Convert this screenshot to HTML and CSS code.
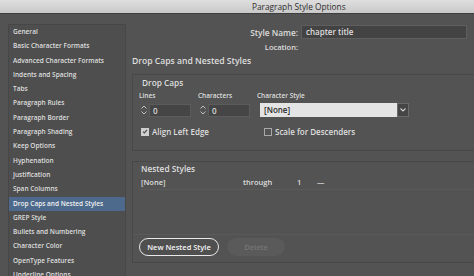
FILE: index.html
```html
<!DOCTYPE html>
<html lang="en">
<head>
    <meta charset="UTF-8">
    <title>Paragraph Style Options</title>
    <link rel="stylesheet" href="styles.css">
</head>
<body>
    <div class="titlebar">Paragraph Style Options</div>
    <div class="window">
        <nav class="sidebar">
            <div class="item">General</div>
            <div class="item">Basic Character Formats</div>
            <div class="item">Advanced Character Formats</div>
            <div class="item">Indents and Spacing</div>
            <div class="item">Tabs</div>
            <div class="item">Paragraph Rules</div>
            <div class="item">Paragraph Border</div>
            <div class="item">Paragraph Shading</div>
            <div class="item">Keep Options</div>
            <div class="item">Hyphenation</div>
            <div class="item">Justification</div>
            <div class="item">Span Columns</div>
            <div class="item selected">Drop Caps and Nested Styles</div>
            <div class="item">GREP Style</div>
            <div class="item">Bullets and Numbering</div>
            <div class="item">Character Color</div>
            <div class="item">OpenType Features</div>
            <div class="item">Underline Options</div>
        </nav>
        <main class="panel">
            <div class="field-row">
                <span class="field-label">Style Name:</span>
                <div class="name-input">chapter title</div>
            </div>
            <div class="field-row loc">
                <span class="field-label">Location:</span>
            </div>
            <h2 class="section-title">Drop Caps and Nested Styles</h2>

            <div class="group drop">
                <div class="group-title">Drop Caps</div>
                <div class="drop-row">
                    <div class="col">
                        <span class="small-label">Lines</span>
                        <div class="spinner">
                            <span class="arrows">
                                <svg width="8" height="12" viewBox="0 0 8 12"><path d="M1.5 4.5 L4 2 L6.5 4.5 M1.5 7.5 L4 10 L6.5 7.5" fill="none" stroke="#bdbdbd" stroke-width="1"/></svg>
                            </span>
                            <span class="spin-field">0</span>
                        </div>
                    </div>
                    <div class="col">
                        <span class="small-label">Characters</span>
                        <div class="spinner">
                            <span class="arrows">
                                <svg width="8" height="12" viewBox="0 0 8 12"><path d="M1.5 4.5 L4 2 L6.5 4.5 M1.5 7.5 L4 10 L6.5 7.5" fill="none" stroke="#bdbdbd" stroke-width="1"/></svg>
                            </span>
                            <span class="spin-field">0</span>
                        </div>
                    </div>
                    <div class="col">
                        <span class="small-label">Character Style</span>
                        <div class="dropdown">
                            <span class="drop-value">[None]</span>
                            <span class="drop-btn">
                                <svg width="6" height="4" viewBox="0 0 6 4"><path d="M0.5 0.5 L3 3 L5.5 0.5" fill="none" stroke="#d0d0d0" stroke-width="1.1"/></svg>
                            </span>
                        </div>
                    </div>
                </div>
                <div class="check-row">
                    <label class="check"><span class="box checked">
                        <svg width="7" height="7" viewBox="0 0 7 7"><path d="M1.2 3.6 L2.8 5.2 L5.8 1.5" fill="none" stroke="#4a4a4a" stroke-width="1.3"/></svg>
                    </span>Align Left Edge</label>
                    <label class="check scale"><span class="box"></span>Scale for Descenders</label>
                </div>
            </div>

            <div class="group nested">
                <div class="group-title">Nested Styles</div>
                <div class="nested-row">
                    <span class="n-style">[None]</span>
                    <span class="n-through">through</span>
                    <span class="n-count">1</span>
                    <span class="n-dash">—</span>
                </div>
                <div class="nested-list"></div>
                <div class="buttons">
                    <button class="btn primary">New Nested Style</button>
                    <button class="btn disabled">Delete</button>
                </div>
            </div>
        </main>
    </div>
</body>
</html>
```

FILE: styles.css
```css
body {
    margin: 0;
    width: 474px;
    height: 276px;
    overflow: hidden;
    background: #535353;
    font-family: "Open Sans", sans-serif;
    font-weight: 600;
    font-size: 7px;
    color: #dedede;
}
.titlebar {
    height: 14px;
    line-height: 14px;
    background: linear-gradient(#dedede, #c9c9c9);
    border-bottom: 1px solid #3e3e3e;
    box-sizing: border-box;
    color: #2e2e2e;
    font-size: 8.3px;
    font-weight: 400;
    padding-left: 252px;
}
.window {
    display: flex;
    padding-top: 10px;
}
.sidebar {
    width: 118px;
    margin-left: 8px;
    height: 260px;
    box-sizing: border-box;
    border: 1px solid #474747;
    border-bottom: none;
    background: #4e4e4e;
}
.item {
    height: 14.3px;
    line-height: 14.3px;
    padding-left: 4px;
    white-space: nowrap;
    font-size: 6.5px;
}
.item.selected {
    background: #4d6a8c;
    color: #f0f0f0;
}
.panel {
    flex: 1;
    padding-left: 6px;
    overflow: hidden;
}
.field-row {
    display: flex;
    align-items: center;
    height: 14px;
}
.field-row:first-child {
    margin-top: 1px;
}
.field-label {
    width: 166px;
    text-align: right;
    padding-right: 4px;
    font-size: 7.5px;
}
.field-row:first-child .field-label {
    font-size: 8.3px;
    padding-right: 3px;
}
.loc {
    margin-top: 1px;
}
.name-input {
    width: 166px;
    height: 14px;
    box-sizing: border-box;
    background: #434343;
    border: 1px solid #5e5e5e;
    padding-left: 4px;
    line-height: 12px;
    font-size: 8px;
}
.section-title {
    margin: 1px 0 0;
    font-size: 8.6px;
    font-weight: 600;
    height: 13px;
}
.group {
    width: 360px;
    border: 1px solid #484848;
    box-sizing: border-box;
    padding-left: 6px;
}
.drop {
    margin-top: 6px;
    height: 77px;
    padding-top: 2px;
}
.group-title {
    font-size: 8.3px;
    padding-left: 3px;
    height: 11px;
}
.drop-row {
    display: flex;
    margin-top: 2px;
}
.col {
    display: flex;
    flex-direction: column;
    margin-right: 7px;
}
.small-label {
    height: 11px;
    line-height: 11px;
    font-size: 6.5px;
}
.spinner {
    display: flex;
    align-items: center;
    margin-top: 2px;
    width: 52px;
    height: 14px;
}
.arrows {
    width: 10px;
    display: flex;
    justify-content: center;
}
.spin-field {
    flex: 1;
    height: 13px;
    box-sizing: border-box;
    background: #454545;
    border: 1px solid #5c5c5c;
    line-height: 11px;
    padding-left: 3px;
    font-size: 8px;
}
.dropdown {
    display: flex;
    margin-top: 2px;
    height: 14px;
    margin-left: 3px;
}
.drop-value {
    width: 137px;
    box-sizing: border-box;
    background: #e4e4e4;
    color: #2c2c2c;
    line-height: 14px;
    padding-left: 4px;
    font-size: 8px;
}
.drop-btn {
    width: 12px;
    box-sizing: border-box;
    border: 1px solid #6a6a6a;
    background: #454545;
    display: flex;
    align-items: center;
    justify-content: center;
}
.check-row {
    display: flex;
    margin-top: 9px;
}
.check {
    display: flex;
    align-items: center;
    font-size: 8px;
    width: 122px;
    margin-left: 2px;
}
.check.scale {
    width: auto;
    margin-left: 1px;
}
.box {
    width: 8px;
    height: 8px;
    box-sizing: border-box;
    border: 1px solid #a8a8a8;
    margin-right: 3px;
    display: flex;
    align-items: center;
    justify-content: center;
}
.box.checked {
    background: #cfcfcf;
    border-color: #cfcfcf;
}
.nested {
    margin-top: 10px;
    height: 102px;
    padding-top: 1px;
}
.nested .group-title {
    padding-left: 2px;
}
.nested-row {
    display: flex;
    height: 14px;
    line-height: 14px;
    margin-top: 1px;
    padding-left: 2px;
    border-bottom: 1px solid #5a5a5a;
    font-size: 7.5px;
}
.n-style {
    width: 102px;
}
.n-through {
    width: 54px;
}
.n-count {
    width: 20px;
}
.nested-list {
    height: 44px;
    border-bottom: 1px solid #5a5a5a;
    margin-left: -6px;
}
.buttons {
    display: flex;
    gap: 8px;
    margin-top: 3px;
}
.btn {
    height: 18px;
    border-radius: 9px;
    font-family: "Open Sans", sans-serif;
    font-weight: 600;
    font-size: 7.5px;
    padding: 0;
}
.btn.primary {
    width: 80px;
    background: #4f4f4f;
    border: 1.5px solid #e8e8e8;
    color: #f4f4f4;
}
.btn.disabled {
    width: 58px;
    background: #5a5a5a;
    border: none;
    color: #767676;
}
```
